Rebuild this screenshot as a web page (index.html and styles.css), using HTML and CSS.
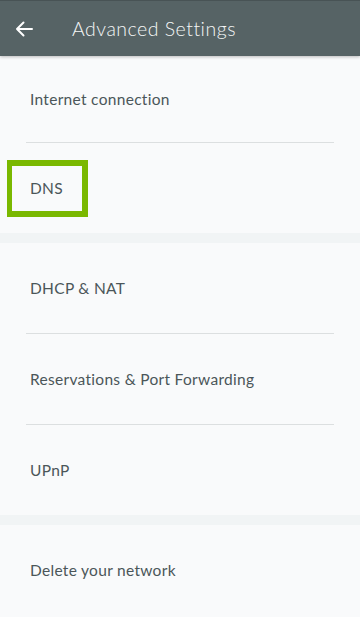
FILE: index.html
```html
<!DOCTYPE html>
<html lang="en">
<head>
  <meta charset="UTF-8" />
  <meta name="viewport" content="width=device-width, initial-scale=1.0"/>
  <title>Advanced Settings</title>
  <link rel="stylesheet" href="styles.css">
</head>
<body>
  <header class="topbar">
    <button class="back" type="button" aria-label="Back">
      <svg width="20" height="20" viewBox="0 0 20 20">
        <path d="M18 10H3M9.5 3.5L3 10l6.5 6.5" fill="none" stroke="#fff" stroke-width="2" stroke-linecap="round" stroke-linejoin="round"/>
      </svg>
    </button>
    <h1>Advanced Settings</h1>
  </header>

  <main>
    <section class="group">
      <a class="item first" href="#">Internet connection</a>
      <a class="item highlight" href="#"><span class="mark">DNS</span></a>
    </section>
    <section class="group">
      <a class="item" href="#">DHCP &amp; NAT</a>
      <a class="item" href="#">Reservations &amp; Port Forwarding</a>
      <a class="item" href="#">UPnP</a>
    </section>
    <section class="group last">
      <a class="item" href="#">Delete your network</a>
    </section>
  </main>
</body>
</html>
```

FILE: styles.css
```css
body {
  margin: 0;
  font-family: Lato, "Open Sans", sans-serif;
  background-color: #f9fafb;
}
.topbar {
  position: relative;
  z-index: 1;
  height: 56px;
  display: flex;
  align-items: center;
  background-color: #566365;
  border-top: 1px solid #485355;
  box-sizing: border-box;
  box-shadow: 0 1px 3px rgba(0, 0, 0, 0.25);
}
.back {
  width: 48px;
  height: 56px;
  padding: 0 0 0 14px;
  border: none;
  background: none;
  display: flex;
  align-items: center;
}
.topbar h1 {
  margin: 0 0 0 24px;
  font-size: 19.5px;
  font-weight: 300;
  color: #f4f6f6;
  letter-spacing: 0.5px;
}
main {
  display: flex;
  flex-direction: column;
  gap: 10px;
  background-color: #f1f4f5;
}
.group {
  background-color: #f9fafb;
}
.item {
  display: flex;
  align-items: center;
  height: 90px;
  margin: 0 26px;
  padding-left: 4px;
  font-size: 15.5px;
  letter-spacing: 0.3px;
  color: #4b5659;
  text-decoration: none;
  border-top: 1px solid #dcdfe0;
}
.item:first-child {
  border-top: none;
}
.item.first {
  height: 86px;
}
.item.highlight {
  padding-left: 0;
}
.mark {
  box-sizing: border-box;
  width: 81px;
  height: 57px;
  margin-left: -19px;
  display: flex;
  align-items: center;
  padding-left: 18px;
  border: 6px solid #7ab800;
  border-left-width: 5px;
}
```
